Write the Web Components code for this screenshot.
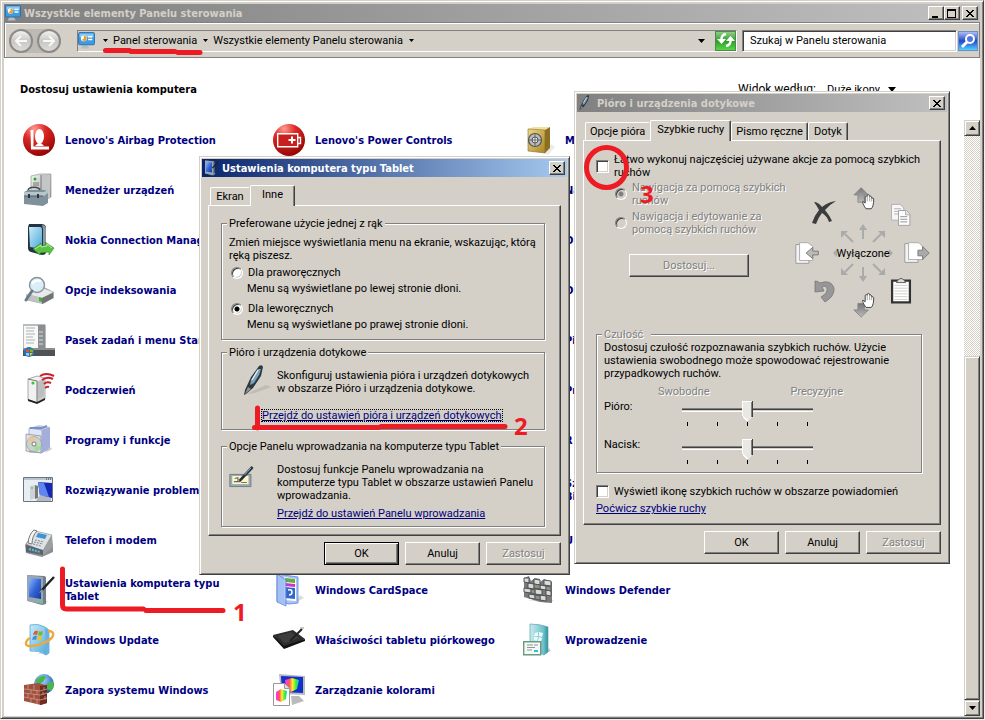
<!DOCTYPE html>
<html lang="pl">
<head>
<meta charset="utf-8">
<title>Wszystkie elementy Panelu sterowania</title>
<style>
html,body{margin:0;height:100%}
body{
  --face:#d4d0c8;--shade:#808080;--dark:#404040;--light:#fff;--link:#00007f;
  --bold:"DejaVu Sans Condensed","DejaVu Sans",sans-serif;
  font:11px/13px Roboto,"Liberation Sans",sans-serif;color:#000;
  background:#eceef0;overflow:hidden;position:relative;
}
main-window{height:calc(100vh - 1px);margin-right:1px}
.tablet{position:absolute;left:199px;top:156px;width:371px}
.pen{position:absolute;left:574px;top:91px;width:376px}
pen-marks{position:absolute;left:0;top:0}
</style>
</head>
<body>
<main-window></main-window>
<win-frame class="pen" inactive heading="Pióro i urządzenia dotykowe" icon="pen"><pen-settings></pen-settings></win-frame>
<win-frame class="tablet" heading="Ustawienia komputera typu Tablet" icon="tablet"><tablet-settings></tablet-settings></win-frame>
<pen-marks></pen-marks>
<script>
const DEFS = `<defs>
<linearGradient id="sil" x1="0" y1="0" x2="1" y2="1"><stop offset="0" stop-color="#f4f4f4"/><stop offset="1" stop-color="#8f9294"/></linearGradient>
<linearGradient id="blu" x1="0" y1="0" x2="1" y2="1"><stop offset="0" stop-color="#8ab8ff"/><stop offset=".5" stop-color="#3566d8"/><stop offset="1" stop-color="#163a9c"/></linearGradient>
<linearGradient id="sky" x1="0" y1="0" x2="1" y2="1"><stop offset="0" stop-color="#c8ecfa"/><stop offset="1" stop-color="#4aa6d8"/></linearGradient>
<linearGradient id="gry" x1="0" y1="0" x2="0" y2="1"><stop offset="0" stop-color="#777"/><stop offset="1" stop-color="#bbb"/></linearGradient>
<linearGradient id="tea" x1="0" y1="0" x2="1" y2="0"><stop offset="0" stop-color="#c9ecf0"/><stop offset=".75" stop-color="#6fc0c9"/><stop offset="1" stop-color="#2f8f9b"/></linearGradient>
<linearGradient id="gold" x1="0" y1="0" x2="1" y2="1"><stop offset="0" stop-color="#ecd88a"/><stop offset="1" stop-color="#a98526"/></linearGradient>
<linearGradient id="rain" x1="0" y1="0" x2="1" y2="0"><stop offset="0" stop-color="#f3f"/><stop offset=".3" stop-color="#f55"/><stop offset=".55" stop-color="#fe3"/><stop offset=".8" stop-color="#3e3"/><stop offset="1" stop-color="#0cf"/></linearGradient>
<radialGradient id="red" cx=".35" cy=".15" r="1"><stop offset="0" stop-color="#ff9a90"/><stop offset=".35" stop-color="#dc2a26"/><stop offset=".8" stop-color="#a00808"/><stop offset="1" stop-color="#6d0000"/></radialGradient>
<radialGradient id="glo" cx=".4" cy=".3" r=".8"><stop offset="0" stop-color="#a8e0ff"/><stop offset="1" stop-color="#0b3fa8"/></radialGradient>
</defs>`;
const ICONS = {
airbag:`<circle cx="16" cy="16" r="16" fill="url(#red)"/><path d="M7.500 6h3v16.500h15.500v3H8z" fill="#fff"/><ellipse cx="16.500" cy="12.500" rx="4.500" ry="7.500" fill="#fff"/><path d="M12 22q4.500-6 9 0z" fill="#fff"/>`,
battery:`<circle cx="16" cy="16" r="16" fill="url(#red)"/><path d="M4.700 9.700h20v13h-20z" fill="#c8201e" stroke="#fff" stroke-width="1.400"/><path d="M25 13.500h2.500v6H25" fill="none" stroke="#fff" stroke-width="1.400"/><path d="M15.500 16h7M19 12.500v7" fill="none" stroke="#fff" stroke-width="2"/>`,
safe:`<path d="M28 20l4 3-7 8-4-2z" fill="#ddd" opacity=".6"/><path d="M5 5l5-2h17l-5 3z" fill="#f0e2a4"/><path d="M22 6l5-3v21l-5 5z" fill="#8c7020"/><path d="M5 5l17 1v23L5 27z" fill="url(#gold)" stroke="#8c6d1c" stroke-width=".6"/><circle cx="12" cy="16" r="6.500" fill="#b9bcbd" stroke="#555" stroke-width="1.200"/><circle cx="12" cy="16" r="3" fill="#eee" stroke="#555"/><path d="M12 9.500v13M5.500 16h13" stroke="#555" stroke-width=".8"/>`,
devices:`<path d="M8 2l9-2h11v23l-7 4H8z" fill="url(#sil)" stroke="#888" stroke-width=".6"/><path d="M18 1h9v23l-7 3z" fill="#c3c5c6"/><path d="M18 1v25" stroke="#777"/><circle cx="12" cy="5" r="1.500" fill="#2a2"/><path d="M10 9h6M10 11h6" stroke="#777"/><path d="M5 17c0-5 12-5 12 0" fill="none" stroke="#444" stroke-width="1.500"/><path d="M1 18l4-2h17l3 2v11l-5 3L1 30z" fill="#7f929c"/><path d="M1 18h20l4-2v3l-4 3H1z" fill="#b6c4cb"/><path d="M1 22h19" stroke="#4c5c66"/><path d="M5 20h2v4H5zM14 20h2v4h-2z" fill="#333"/>`,
phone:`<path d="M6 0h12q5 0 5 4v24q0 3-4 3L8 28q-3-1-3-4V3z" fill="#24333f"/><path d="M6 3h11q2 0 2 3v19L7 23z" fill="url(#sky)"/><path d="M19 1q4 0 4 4v17h-3V5z" fill="#8a9aa4"/><path d="M10 25l8-6v3l5-1-1-3 9 6-5 7v-3l-9 1v2z" fill="#5cc044" stroke="#2b8a20" stroke-width=".6"/><path d="M12 25l6-4v2l6-1v-2l5 4" fill="none" stroke="#b5eb9c"/>`,
index:`<path d="M9 19l10-7 12 6v6l-11 6-18-4z" fill="#a9acae"/><path d="M4 20l12-7 14 5-11 6z" fill="#e8e9ea"/><path d="M19 24l11-5v5l-11 6z" fill="#707375"/><path d="M3 20l16 4v5L3 26z" fill="#bfc1c2"/><path d="M16 23l3 1v4l-3-1z" fill="#3bb32b"/><circle cx="14" cy="11" r="7.500" fill="#d7ecf7" fill-opacity=".9" stroke="#8b9399" stroke-width="1.400"/><path d="M9 10q3-5 9-3" fill="none" stroke="#fff" stroke-width="2"/><path d="M9 17l-6 9" stroke="#6c7b85" stroke-width="3" stroke-linecap="round"/>`,
taskbar:`<path d="M0 0h22l1 2v22H0z" fill="#b9bbbc"/><path d="M1 2h14v22H1z" fill="#f8f8f8"/><path d="M15 1h7v23h-7z" fill="#8b8e90"/><path d="M3 4h9M3 7h8M3 10h9M3 13h7M3 16h9M3 19h8" stroke="#a9b2b2"/><path d="M16 8h4M16 12h4M16 16h4M16 20h4" stroke="#ddd"/><path d="M0 24h32v8H0z" fill="#4e5357"/><path d="M0 24h32v2H0z" fill="#8b8f92"/><circle cx="6" cy="28" r="5" fill="#2a75b8"/><path d="M3 26l3-1v3H3z" fill="#f25022"/><path d="M7 25l3 1v2H7z" fill="#7fba00"/><path d="M3 29h3v3l-3-1z" fill="#9cf"/><path d="M7 29h3l-3 3z" fill="#fc0"/>`,
infrared:`<path d="M5 5l9-3 8 2v21l-8 4-9-3z" fill="#f1f1f1" stroke="#888" stroke-width=".7"/><path d="M14 7l8-3v21l-8 4z" fill="#c8caca"/><path d="M5 5l9 2v22" fill="none" stroke="#777"/><path d="M16 8v16M18 7v16M20 6v16" stroke="#aaa" stroke-width=".7"/><circle cx="10" cy="9" r="1.600" fill="#3c3"/><path d="M5 25l9 3 8-4v2l-8 4-9-3z" fill="#222"/><path d="M17 2q6-4 14 0M19 6q5-4 11-1M21 10q3-3 7-1M22 14q2-2 4-1" fill="none" stroke="#c8202c" stroke-width="2"/>`,
programs:`<path d="M6 4l10-3 11 2v20l-8 6H6z" fill="#c2cce8"/><path d="M6 4l13 2v23L6 26z" fill="#dfe5f5" stroke="#8d9cc8" stroke-width=".7"/><path d="M19 6l8-3v22l-8 4z" fill="#a3aedb"/><path d="M7 4h12l5-2" stroke="#7e8fc4" stroke-width="2" fill="none"/><path d="M3 10l15 2v17L3 27z" fill="#d9dde2" fill-opacity=".8" stroke="#888" stroke-width=".7"/><circle cx="11" cy="20" r="7.500" fill="#c9d4c9" stroke="#888" stroke-width=".5"/><path d="M11 20l-6-5q3-3 6-2z" fill="#f3c28f"/><path d="M11 20l7 3q-2 5-6 4z" fill="#9fdca0"/><circle cx="11" cy="20" r="2" fill="#fff" stroke="#777"/><path d="M22 29l7-4-2-2z" fill="#ccc"/>`,
trouble:`<path d="M.5 3.500h29v24H.5z" fill="#e9eef2" stroke="#687684"/><path d="M1 4h28v2H1z" fill="#b9c6d1"/><path d="M23 5h1M25 5h1M27 5h1" stroke="#333"/><path d="M15 8l14 1v15l-12-2z" fill="#1428b4"/><path d="M15 8l6 1 5 14-9-1z" fill="#5d86ef"/><path d="M17 21l11 3v3H13z" fill="#b4b8c0"/><path d="M7 12l5-1v13l-5 2z" fill="#ced2d5"/><path d="M12 11l3 1v12l-3 1z" fill="#777"/><path d="M8 14h2" stroke="#4b4"/>`,
modem:`<path d="M2 21l9-13 17 4 2 11v5l-11 5-16-4z" fill="#8d9194"/><path d="M3 20l9-13 17 4-9 16z" fill="#dfe2e4" stroke="#808589" stroke-width=".6"/><path d="M3 21l17 5v5L3 28z" fill="#5c6469"/><path d="M15 9l9 2-2 4-9-2z" fill="#3a95d2"/><path d="M5 19q1-9 6-13l3 1q-5 5-5 13z" fill="#f5f5f5" stroke="#777"/><path d="M12 16l9 2M11 18l9 2M10 20l8 2" stroke="#889" stroke-width="1" stroke-dasharray="2 1"/><path d="M6 25l11 3" stroke="#4fc3ee" stroke-width="2" stroke-dasharray="2 1"/><path d="M20 26l9-15 1 12-10 8z" fill="#9b9fa2"/>`,
tablet:`<path d="M13 30l12-2-4-3z" fill="#ccc"/><path d="M4 1l17 1q2 0 2 2v26l-4 1L5 27q-1 0-1-2z" fill="#6f7f8e"/><path d="M4 1l16 2v27L4 27z" fill="#98a6b2"/><path d="M6 4l12 1v20L6 23z" fill="url(#blu)"/><path d="M16 28l2 .5" stroke="#3e4" stroke-width="2"/><path d="M31 3L18 17" stroke="#1d2226" stroke-width="2.400"/><path d="M19 15l-3 4 4-2z" fill="#9aa"/>`,
update:`<path d="M14 31l13-5-4-3z" fill="#ddd"/><path d="M7 1q8-2 15 2l4 3v23l-3 2q-7-5-16-4z" fill="url(#sky)" stroke="#5ba7d0" stroke-width=".8"/><path d="M22 4l4 2v23l-3 2z" fill="#69b1df"/><path d="M11 8q2-2 4-1l-1 4q-2-1-4 0z" fill="#e2582a"/><path d="M16 7q2 1 4 0l-1 4q-2 1-4 0z" fill="#7db72f"/><path d="M10 13q2-2 4-1l-1 4q-2-1-4 0z" fill="#3f8fdc"/><path d="M15 12q2 1 4 0l-1 4q-2 1-4 0z" fill="#f3c11b"/><path d="M25 7c8 0 7 7-4 12-9 4-18 4-18 1 0-3 2-5 4-6" fill="none" stroke="#f0a838" stroke-width="2.400"/>`,
firewall:`<circle cx="21" cy="10" r="10" fill="url(#glo)"/><path d="M13 6q6-6 10-3l-3 5-6 3zM24 10l6-3q2 6-2 10l-4-2z" fill="#49b749"/><path d="M1 11l15-2 8 3v17l-6 2L1 27z" fill="#a0503e"/><path d="M17 12l7-1v18l-7 2z" fill="#6f2c20"/><path d="M1 15l16 2 7-2M1 19l16 2 7-2M1 23l16 3 7-2M5 11v4M11 11v5M8 16v3M14 16v4M5 20v3M11 20v5M8 24v4M14 25v5M21 13v3M20 18v3M22 22v4" stroke="#d09a8a" fill="none" stroke-width=".8"/>`,
cardspace:`<path d="M22 29l9-5-4-3z" fill="#ddd"/><path d="M4 0l21 3v26l-9 1L4 27z" fill="#a9c4f5" stroke="#5a83d8" stroke-width=".8"/><path d="M11 3l12 2v22l-12-1z" fill="#fff"/><path d="M12 4l10 1v4l-10-1z" fill="#6a4"/><path d="M12 9l10 1v3l-10-1z" fill="#c3c"/><path d="M12 13l10 1v11l-10-1z" fill="#36c"/><path d="M15 16q4-1 4 2t-3 3" stroke="#fff" fill="none" stroke-width="1.500"/><path d="M4 0l9 6v26l-9-4z" fill="#a3c0f5" fill-opacity=".85" stroke="#5a83d8" stroke-width=".8"/>`,
wtablet:`<path d="M0 11l20-5 12 9-19 9-3-1z" fill="#2d2d2e"/><path d="M0 11l11 11 21-7v2L11 25 0 13z" fill="#111"/><path d="M4 12l14-4 8 6-14 5z" fill="#3c3d3f"/><path d="M29 5L17 17" stroke="#222" stroke-width="2"/><path d="M27 4h4" stroke="#999"/>`,
colors:`<path d="M6 0l26 2v19l-24-1z" fill="#b8bcc0"/><path d="M8 2l22 1v16L9 18z" fill="#1430c8"/><path d="M12 6l7-2 7 2-2 9-6 3-5-3z" fill="url(#rain)"/><path d="M18 22h8l5 5-12 4z" fill="#bbb"/><path d="M.5 9.500h11l5 5v17H.5z" fill="#fff" stroke="#999"/><path d="M11.500 9.500v5h5" fill="#ddd" stroke="#999"/><path d="M3 18l5-3 6 2-1 8-5 3-5-2z" fill="url(#rain)"/>`,
defender:`<path d="M4 26l27 0-4 3z" fill="#ddd"/><path d="M1 4l5-2 2 5 4-3 5 1v3l4-3 8 3v21l-12-1L1 23z" fill="#77797b"/><g fill="#d9dadb" stroke="#46484a" stroke-width=".9"><path d="M1 4l5 0v5l-5-1zM11 5l6 1v5l-6-1zM21 6l7 1v5l-7-1zM5 9l6 1v5l-6-1zM17 11l6 1v4l-6-1zM1 14l7 1v4l-7-1zM12 15l7 1v5l-7-1zM23 16l5 1v5l-5-1zM6 20l6 1v4l-6-1zM17 21l6 1v5l-6-1z"/></g><g fill="#8c9381" stroke="#46484a" stroke-width=".7"><path d="M11 10l6 1v4l-6-1zM8 15l4 1v4l-4-1zM12 21l5 1v4l-5-1zM23 12l5 1v4l-5-1z"/></g>`,
intro:`<path d="M20 30l8-3-2-3z" fill="#ccc"/><path d="M7 0q10 0 18 3v25l-4 3q-6-4-14-4z" fill="url(#tea)" stroke="#58a5ae" stroke-width=".7"/><path d="M12 9l3-1v4h-4zM16 8l4 1-1 4-3-1zM11 13h4l-1 4-3-1zM16 13l3 1-1 4-3-1z" fill="#e9fbfc"/><path d="M.7 17.700h17v13H.7z" fill="#f6faf6" stroke="#6b9a80" stroke-width="1.400"/><path d="M4 21h6M4 23.500h8M4 26h5M11 21h4" stroke="#8a9a92"/><path d="M11 26h4v2h-4z" fill="#3bd"/>`,
panel:`<path d="M6 31q0-7 7-7t8 7z" fill="#b9bcc0"/><rect x="1" y="1" width="30" height="23" rx="2" fill="#3d9be2" stroke="#1d66a8" stroke-width="1.500"/><path d="M3 3h26v7H3z" fill="#8ac8f4"/><circle cx="11" cy="12" r="5.500" fill="#fff"/><path d="M11 12V7a5 5 0 010 10l-4-2z" fill="#f59a1c"/><path d="M19 9h8M19 14h8" stroke="#fff" stroke-width="2.600"/>`,
pen:`<path d="M5 29l20-9 5 2-16 6z" fill="#8d8d88" opacity=".3"/><path d="M18 1q3-2 4 1l-2 9-8 12-7 6-2 1 1-5 6-13z" fill="#30383e"/><path d="M17 4l-7 11-1 5 4-2 5-8 2-6z" fill="#7ba3bc"/><path d="M17 5l-6 10" stroke="#dceef8" stroke-width="1.400"/><path d="M7 22l3 2-6 5z" fill="#8b959b"/>`,
input:`<path d="M1 14h26v15H1z" fill="#9aa9b2" stroke="#63717a"/><path d="M4 16h20v10H4z" fill="#fbf6c9"/><path d="M7 19l4-1v5M6 23h8" stroke="#666" fill="none" stroke-width="1.400"/><path d="M15 24h7" stroke="#555"/><path d="M29 5L13 22" stroke="#233038" stroke-width="3.400"/><path d="M27 6L19 15" stroke="#86b3cf" stroke-width="1.200"/>`,
up:`<path d="M10 2l9 9h-5v9H6v-9H1z" fill="url(#gry)" stroke="#777" stroke-width=".8"/><g transform="translate(11 9)"><path d="M5 19Q0 12 1 10l3 2V4q1.500-1.500 2.500 0V2.500q1.500-1.500 3 0V4q1.500-1 2.500.500V6q2-1 2.500 1 0 9-3 12z" fill="#fff" stroke="#444" stroke-width="1.200"/><path d="M6.500 4v6M9.500 4v6M12 5.500V10" stroke="#777" stroke-width=".8"/></g>`,
down:`<path d="M10 31l9-9h-5v-8H6v8H1z" fill="url(#gry)" stroke="#777" stroke-width=".8"/><g transform="translate(11 0)"><path d="M5 19Q0 12 1 10l3 2V4q1.500-1.500 2.500 0V2.500q1.500-1.500 3 0V4q1.500-1 2.500.500V6q2-1 2.500 1 0 9-3 12z" fill="#fff" stroke="#444" stroke-width="1.200"/><path d="M6.500 4v6M9.500 4v6M12 5.500V10" stroke="#777" stroke-width=".8"/></g>`,
copy:`<path d="M4 5h10l4 4v14H4z" fill="#f7f7f7" stroke="#aaa"/><path d="M7 10h8M7 13h8M7 16h8" stroke="#aaa"/><path d="M12 12h9l4 4v13H12z" fill="#fdfdfd" stroke="#999"/><path d="M20 12v5h5" fill="#ddd" stroke="#aaa"/><path d="M14 19h8M14 22h8M14 25h8" stroke="#888"/>`,
forward:`<path d="M3 6h14v20H3z" fill="#f3f3f3" stroke="#999"/><path d="M7 5h11l4 4v14H7z" fill="#fff" stroke="#aaa"/><path d="M17 13h5V9l7 7-7 7v-4h-5z" fill="#aaa" stroke="#777"/>`,
back:`<path d="M3 7h14v20H3z" fill="#f3f3f3" stroke="#999"/><path d="M7 5h9l5 4v15H7z" fill="#fff" stroke="#aaa"/><path d="M27 14h-6v-4l-7 6 7 6v-4h6z" fill="#bbb" stroke="#777"/>`,
clip:`<path d="M6.500 5h19v23h-19z" fill="#fff" stroke="#333" stroke-width="2.400"/><path d="M9 10h14M9 13h14M9 16h14M9 19h14M9 22h14M9 25h14" stroke="#ccc"/><path d="M11 7l2-3q3-3 6 0l2 3z" fill="#ddd" stroke="#555"/>`,
undo:`<path d="M6 7q3 0 5 2 11-4 14 5 1 8-9 14l-4-5q7-4 6-9-1-3-5-1l2 4-9 1z" fill="#979797" stroke="#777" stroke-width=".8"/>`,
cross:`<path d="M5 5q4 0 8 5 6-5 14-6-7 4-11 9 5 6 7 11l-3 1q-2-6-7-9-4 5-6 11l-4-1q2-7 7-13-2-4-5-8z" fill="#3c3c3c"/>`
};
const svg=(n,w)=>`<svg width="${w}" height="${w}" viewBox="0 0 32 32" aria-hidden="true">${DEFS}${ICONS[n]}</svg>`;
const define=(name,html,setup)=>{
  const t=document.createElement('template');t.innerHTML=html;
  customElements.define(name,class extends HTMLElement{
    connectedCallback(){
      if(this.shadowRoot)return;
      const r=this.attachShadow({mode:'open'});
      r.append(t.content.cloneNode(true));
      if(setup)setup(r,this);
    }
  });
};

define('win-icon',`<style>:host{display:block;flex:none}svg{display:block;overflow:visible}</style>`,(r,h)=>{
  r.innerHTML+=svg(h.getAttribute('name'),h.getAttribute('size')||32);
});

define('caption-button',`<style>
:host{display:block;flex:none}
button{display:grid;place-items:center;width:16px;height:14px;padding:0;background:var(--face);border:1px solid;border-color:#fff #404040 #404040 #fff;box-shadow:inset -1px -1px #808080}
svg{display:block}
</style><button><svg width="10" height="9" viewBox="0 0 10 9" shape-rendering="crispEdges"></svg></button>`,(r,h)=>{
  const k=h.getAttribute('kind');
  r.querySelector('button').setAttribute('aria-label',k);
  r.querySelector('svg').innerHTML={
    close:'<path d="M1 1h2v1h1v1h2V2h1V1h2v1H8v1H7v1H6v1h1v1h1v1h1v1H7V7H6V6H4v1H3v1H1V7h1V6h1V5h1V4H3V3H2V2H1z"/>',
    minimize:'<path d="M1 7h6v2H1z"/>',
    maximize:'<path fill-rule="evenodd" d="M0 0h9v9H0zM1 2h7v6H1z"/>'}[k];
});

define('title-bar',`<style>
:host{display:flex;align-items:center;height:18px;padding:0 2px 0 1px;background:linear-gradient(90deg,#0a246a,#a6caf0);color:#fff;font:bold 11px/13px var(--bold)}
:host([inactive]){background:linear-gradient(90deg,#808080,#c0c0c0);color:var(--face)}
span{flex:1;padding-left:3px;white-space:nowrap}
div{display:flex}
caption-button[kind=close]:not(:first-child){margin-left:2px}
</style><span></span><div></div>`,(r,h)=>{
  const s=r.querySelector('span');
  s.textContent=h.getAttribute('heading');
  s.insertAdjacentHTML('beforebegin',`<win-icon size="16" name="${h.getAttribute('icon')}"></win-icon>`);
  r.querySelector('div').innerHTML=(h.getAttribute('buttons')||'close').split(' ').map(b=>`<caption-button kind="${b}"></caption-button>`).join('');
});

define('win-frame',`<style>
:host{display:flex;flex-direction:column;box-sizing:border-box;padding:2px;background:var(--face);border:1px solid;border-color:#d4d0c8 #404040 #404040 #d4d0c8;box-shadow:inset 1px 1px #fff,inset -1px -1px #808080}
.body{flex:1;min-height:0;display:flex;flex-direction:column}
</style><div class="top"></div><div class="body"><slot></slot></div>`,(r,h)=>{
  r.querySelector('.top').innerHTML=`<title-bar heading="${h.getAttribute('heading')}" icon="${h.getAttribute('icon')}" buttons="${h.getAttribute('buttons')||'close'}"${h.hasAttribute('inactive')?' inactive':''}></title-bar>`;
});

define('win-button',`<style>
:host{display:block;width:75px}
button{width:100%;height:23px;padding:0;font:inherit;color:#000;background:var(--face);border:1px solid;border-color:#fff #404040 #404040 #fff;box-shadow:inset -1px -1px #808080}
:host([primary]) button{border-color:#000;box-shadow:inset 1px 1px #fff,inset -1px -1px #404040,inset -2px -2px #808080}
button:disabled{color:#808080;text-shadow:1px 1px #fff}
</style><button><slot></slot></button>`,(r,h)=>{r.querySelector('button').disabled=h.hasAttribute('disabled')});

define('dialog-body',`<style>
:host{display:block;padding:8px 6px 7px}
.tabs{display:flex;align-items:flex-end;height:20px;padding-left:2px}
.panel{display:flex;flex-direction:column;padding:0 15px 0 12px;border:1px solid;border-color:#fff #404040 #404040 #fff;box-shadow:inset -1px -1px #808080}
.buttons{display:flex;justify-content:flex-end;gap:6px;padding-top:6px}
button{box-sizing:border-box;min-width:40px;height:18px;padding:0 4px;font:inherit;color:#000;white-space:nowrap;background:var(--face);border:1px solid;border-color:#fff #404040 transparent #fff;border-bottom:0;border-radius:2px 2px 0 0;box-shadow:inset -1px 0 #808080}
button.before{border-right-color:var(--face);box-shadow:none}
button[aria-selected=true]{position:relative;min-width:45px;height:21px;margin-bottom:-1px;padding:0 6px 3px}
</style><div class="tabs" role="tablist"></div><div class="panel"><slot></slot></div>
<div class="buttons"></div>`,(r,h)=>{
  const tabs=h.getAttribute('tabs').split('|'),sel=+h.getAttribute('selected');
  r.querySelector('.tabs').innerHTML=tabs.map((t,i)=>`<button role="tab" aria-selected="${i===sel}" class="${i<sel?'before':''}">${t}</button>`).join('');
  r.querySelector('.buttons').innerHTML=`<win-button${h.hasAttribute('primary')?' primary':''}>OK</win-button><win-button>Anuluj</win-button><win-button disabled>Zastosuj</win-button>`;
});

define('group-box',`<style>
:host{display:block}
fieldset{min-width:0;margin:0;padding:0 7px;border:1px solid #808080;box-shadow:1px 1px #fff,inset 1px 1px #fff}
legend{position:relative;margin:0;padding:0 2px;margin-left:-2px;background:var(--face)}
:host([disabled]) legend{color:#808080;text-shadow:1px 1px #fff;padding-right:8px}
</style><fieldset><legend></legend><slot></slot></fieldset>`,(r,h)=>{r.querySelector('legend').textContent=h.getAttribute('label')});

define('check-option',`<style>
:host{display:block}
label{display:flex;align-items:center;gap:5px;white-space:nowrap}
input{appearance:none;flex:none;box-sizing:border-box;width:13px;height:13px;margin:0;background:#fff;border:1px solid;border-color:#808080 #fff #fff #808080;box-shadow:inset 1px 1px #404040,inset -1px -1px #d4d0c8}
input[type=radio]{width:12px;height:12px;border-radius:50%}
input[type=radio]:checked{background:radial-gradient(circle,#000 0 2px,#fff 3px)}
input[type=radio]:disabled{background:var(--face)}
input[type=radio]:disabled:checked{background:radial-gradient(circle,#808080 0 2px,var(--face) 3px)}
:host([disabled]) label{color:#808080;text-shadow:1px 1px #fff}
</style><label><input><span><slot></slot></span></label>`,(r,h)=>{
  const i=r.querySelector('input');i.type=h.getAttribute('type')||'checkbox';
  i.checked=h.hasAttribute('checked');i.disabled=h.hasAttribute('disabled');
});

define('tick-slider',`<style>
:host{display:block;width:131px}
input{appearance:none;display:block;width:100%;height:22px;margin:0;background:linear-gradient(#808080 1px,#404040 1px 2px,#d4d0c8 2px 3px,#fff 3px) 0 8px/100% 4px no-repeat}
input::-webkit-slider-thumb{appearance:none;width:11px;height:21px;border:0;background:url("data:image/svg+xml,%3Csvg xmlns='http://www.w3.org/2000/svg' width='11' height='21' shape-rendering='crispEdges'%3E%3Cpath d='M0 0h11v15l-5 5H5l-5-5z' fill='%23eae8e3'/%3E%3Cpath d='M.5 15V.5H10M1 15.500l4.500 4.500' fill='none' stroke='%23fff'/%3E%3Cpath d='M9.500 1v14.500' fill='none' stroke='%23808080'/%3E%3Cpath d='M10.500 0v15.500' fill='none' stroke='%23404040'/%3E%3C/svg%3E")}
.ticks{display:flex;justify-content:space-between;padding:0 5px}
i{width:1px;height:4px;background:#000}
</style><input type="range" min="0" max="4" value="2"><div class="ticks"><i></i><i></i><i></i><i></i><i></i></div>`,(r,h)=>{r.querySelector('input').setAttribute('aria-label',h.getAttribute('label'))});

define('tablet-settings',`<style>
:host{display:block}
p{margin:0;white-space:nowrap}
a{color:var(--link);white-space:nowrap}
.one{margin-top:11px}.two{margin-top:6px}.three{margin-top:10px;margin-bottom:8px}
.hand{padding:6px 0 8px}
.hand check-option{margin:4px 0 3px 2px}
.hand .second{margin-top:7px}
.sub{padding-left:18px}
.row{display:grid;grid-template-columns:48px 1fr;padding-top:10px}
.row win-icon{justify-self:start}
.pen{padding-left:12px;grid-template-columns:36px 1fr}
.pen win-icon{margin-top:-4px;height:30px}
.focus{display:block;width:fit-content;margin:14px 0 7px 32px;padding:0 1px;outline:1px dotted #000;outline-offset:-1px}
.last{display:inline-block;margin:5px 0 6px}
</style>
<dialog-body tabs="Ekran|Inne" selected="1" primary>
<group-box class="one" label="Preferowane użycie jednej z rąk"><div class="hand">
<p>Zmień miejsce wyświetlania menu na ekranie, wskazując, którą<br>ręką piszesz.</p>
<check-option type="radio">Dla praworęcznych</check-option><p class="sub">Menu są wyświetlane po lewej stronie dłoni.</p>
<check-option class="second" type="radio" checked>Dla leworęcznych</check-option><p class="sub">Menu są wyświetlane po prawej stronie dłoni.</p>
</div></group-box>
<group-box class="two" label="Pióro i urządzenia dotykowe">
<div class="row pen"><win-icon name="pen" size="32"></win-icon><p>Skonfiguruj ustawienia pióra i urządzeń dotykowych<br>w obszarze Pióro i urządzenia dotykowe.</p></div>
<a class="focus" href="#pen">Przejdź do ustawień pióra i urządzeń dotykowych</a>
</group-box>
<group-box class="three" label="Opcje Panelu wprowadzania na komputerze typu Tablet">
<div class="row"><win-icon name="input" size="26"></win-icon><div><p>Dostosuj funkcje Panelu wprowadzania na<br>komputerze typu Tablet w obszarze ustawień Panelu<br>wprowadzania.</p><a class="last" href="#input">Przejdź do ustawień Panelu wprowadzania</a></div></div>
</group-box>
</dialog-body>`);

define('gesture-pad',`<style>
:host{display:block;position:relative;width:136px;height:140px}
win-icon,.arrows,span{position:absolute;transform:translate(-50%,-50%)}
.arrows,span{left:50%;top:72px}
</style>
<svg class="arrows" width="62" height="60" viewBox="-31 -30 62 60" fill="#aaa" stroke="#aaa" stroke-width="2"><path d="M0-14v-11M0 14v11M-10-11l-8-8M10-11l8-8M-10 11l-8 8M10 11l8 8"/><path d="M-4-23l4-6 4 6zM-4 23l4 6 4-6zM-22-22h7l-7 7zM22-22h-7l7 7zM-22 22h7l-7-7zM22 22h-7l7-7zM-30 0l4-4v8zM30 0l-4-4v8z" stroke="none"/></svg>
<span>Wyłączone</span>`,r=>{
  for(const [n,x,y,s] of [['up',71,18,26],['copy',107,33,28],['forward',122,72,30],['clip',106,110,30],['down',71,124,26],['undo',30,109,32],['back',13,72,30],['cross',30,32,32]])
    r.innerHTML+=`<win-icon name="${n}" size="${s}" style="left:${x}px;top:${y}px"></win-icon>`;
});

define('pen-settings',`<style>
:host{display:block}
p{margin:0;white-space:nowrap}
a{display:block;width:fit-content;color:var(--link);margin:4px 0 9px}
.main{margin:12px 0 2px}
.mid{display:flex;justify-content:space-between;margin-right:-6px}
.mid>div{display:flex;flex-direction:column;gap:3px;padding-left:19px}
.mid win-button{width:120px;margin:15px 0 0 14px}
.sense{margin:7px 3px 0 0}
.ends{display:flex;justify-content:space-between;width:185px;margin:5px 0 2px 54px;color:#808080;text-shadow:1px 1px #fff}
.row{display:grid;grid-template-columns:78px auto;justify-content:start;min-height:30px;margin-bottom:8px}
.row+.row{margin-bottom:4px}
.tray{margin-top:12px}
</style>
<dialog-body tabs="Opcje pióra|Szybkie ruchy|Pismo ręczne|Dotyk" selected="1">
<check-option class="main">Łatwo wykonuj najczęściej używane akcje za pomocą szybkich<br>ruchów</check-option>
<div class="mid"><div>
<check-option type="radio" disabled checked>Nawigacja za pomocą szybkich<br>ruchów</check-option>
<check-option type="radio" disabled>Nawigacja i edytowanie za<br>pomocą szybkich ruchów</check-option>
<win-button disabled>Dostosuj...</win-button></div>
<gesture-pad></gesture-pad></div>
<group-box class="sense" label="Czułość" disabled>
<p>Dostosuj czułość rozpoznawania szybkich ruchów. Użycie<br>ustawienia swobodnego może spowodować rejestrowanie<br>przypadkowych ruchów.</p>
<div class="ends"><span>Swobodne</span><span>Precyzyjne</span></div>
<div class="row"><span>Pióro:</span><tick-slider label="Pióro"></tick-slider></div>
<div class="row"><span>Nacisk:</span><tick-slider label="Nacisk"></tick-slider></div>
</group-box>
<check-option class="tray">Wyświetl ikonę szybkich ruchów w obszarze powiadomień</check-option>
<a href="#practice">Poćwicz szybkie ruchy</a>
</dialog-body>`);

define('cp-item',`<style>
:host{display:block}
a{display:grid;grid-template-columns:32px 184px;gap:10px;align-items:center;min-height:32px;color:var(--link);font:bold 11px/13px var(--bold);text-decoration:none}
</style><a href="#item"><span></span><b><slot></slot></b></a>`,(r,h)=>{
  const n=h.getAttribute('icon');if(n)r.querySelector('span').innerHTML=`<win-icon name="${n}"></win-icon>`;
});

define('scroll-bar',`<style>
:host{display:flex;flex-direction:column;width:16px;background:repeating-conic-gradient(#fff 0 25%,#d4d0c8 0 50%) 0 0/2px 2px}
button,.thumb{box-sizing:border-box;width:16px;background:var(--face);border:1px solid;border-color:#d4d0c8 #404040 #404040 #d4d0c8;box-shadow:inset 1px 1px #fff,inset -1px -1px #808080}
button{height:16px;padding:0;display:grid;place-items:center}
.track{flex:1;display:flex;flex-direction:column;justify-content:flex-end}
.thumb{height:61%}
</style><button aria-label="W górę"><svg width="7" height="4"><path d="M0 4h7L3.500 0z"/></svg></button><div class="track"><div class="thumb"></div></div><button aria-label="W dół"><svg width="7" height="4"><path d="M0 0h7L3.500 4z"/></svg></button>`);

define('nav-toolbar',`<style>
:host{display:flex;align-items:center;height:33px;padding:1px 0 0 4px;background:var(--face);border:1px solid #808080;box-shadow:inset 1px 1px #fff}
.nav{display:flex;gap:4px;margin-right:16px;border-radius:13px;background:#bdbab4}
.nav button{width:24px;height:24px;padding:0;border:2px solid #8b8b89;border-radius:50%;background:linear-gradient(#f1f1ef,#c8c7c3 50%,#dcdbd7);display:grid;place-items:center}
.addr{flex:1;box-sizing:border-box;height:22px;display:flex;align-items:center;border:1px solid;border-color:#808080 #fff #fff #808080;margin-right:5px;white-space:nowrap}
.addr a{color:#000;text-decoration:none;padding:0 6px 0 5px}
.addr win-icon{margin-right:8px}
.drop{margin-left:auto;margin-right:10px}
.arrow{width:5px;height:3px}
.refresh,.find{box-sizing:border-box;padding:0;height:20px;display:grid;place-items:center}
.refresh{width:21px;border:1px solid #52884f;background:linear-gradient(#8fcf83,#2f9c2c 50%,#56d843)}
.find{width:20px;border:1px solid #6b8fc4;background:linear-gradient(#aebcf2,#2347cc 50%,#51d2ff);margin:0 1px}
input{box-sizing:border-box;width:215px;height:22px;padding:0 7px;font:inherit;color:#000;background:#fff;border:1px solid;border-color:#808080 #fff #fff #808080;box-shadow:inset 1px 1px #404040,inset -1px -1px #d4d0c8;border-radius:0}
</style>
<div class="nav"><button aria-label="Wstecz"><svg width="16" height="14" fill="none" stroke="#f8f8f6" stroke-width="2"><path d="M14 7H3M8 2L3 7l5 5"/></svg></button><button aria-label="Dalej"><svg width="16" height="14" fill="none" stroke="#f8f8f6" stroke-width="2"><path d="M2 7h11M8 2l5 5-5 5"/></svg></button></div>
<div class="addr"><win-icon name="panel" size="17"></win-icon><svg class="arrow"><path d="M0 0h5L2.500 3z"/></svg><a href="#panel">Panel sterowania</a><svg class="arrow"><path d="M0 0h5L2.500 3z"/></svg><a href="#all">Wszystkie elementy Panelu sterowania</a><svg class="arrow"><path d="M0 0h5L2.500 3z"/></svg>
<svg class="drop" width="7" height="4"><path d="M0 0h7L3.500 4z"/></svg>
<button class="refresh" aria-label="Odśwież"><svg width="18" height="15" fill="none" stroke="#fff" stroke-width="2.400"><path d="M9 1Q4 2 4.500 7M9 13q5-1 4.500-6"/><path d="M0 6h9l-4.500 5zM9 8h9l-4.500-5z" fill="#fff" stroke="none"/></svg></button></div>
<input type="text" aria-label="Szukaj" value="Szukaj w Panelu sterowania">
<button class="find" aria-label="Szukaj"><svg width="16" height="16" fill="none" stroke="#fff" stroke-width="2"><path d="M7 9l-5 5" stroke-width="3"/><circle cx="10" cy="6" r="4" fill="#4f78dd"/></svg></button>`);

define('main-window',`<style>
:host{display:block}
win-frame{height:100%;padding:3px 3px 2px}
.content{flex:1;min-height:0;display:flex;flex-direction:column;background:#fff}
header{display:flex;height:62px;align-items:center;box-sizing:border-box;padding:0 84px 0 16px;justify-content:space-between}
h1{margin:0;font:bold 11px/13px var(--bold)}
.view{display:flex;align-items:center;gap:11px}
.view span{font-size:12px}
.view button{display:flex;align-items:center;gap:8px;border:0;padding:0;background:none;font:inherit;color:#000}
.body{flex:1;min-height:0;display:flex;justify-content:space-between}
.grid{display:grid;grid-template-columns:repeat(3,226px);grid-auto-rows:32px;gap:18px 24px;padding:4px 0 0 19px}
.c3{grid-column:3}
</style>
<win-frame inactive heading="Wszystkie elementy Panelu sterowania" icon="panel" buttons="minimize maximize close">
<nav-toolbar></nav-toolbar>
<div class="content">
<header><h1>Dostosuj ustawienia komputera</h1><div class="view"><span>Widok według:</span><button>Duże ikony <svg width="8" height="5"><path d="M0 0h8L4 5z"/></svg></button></div></header>
<div class="body"><div class="grid">
<cp-item icon="airbag">Lenovo's Airbag Protection</cp-item><cp-item icon="battery">Lenovo's Power Controls</cp-item><cp-item icon="safe">M</cp-item>
<cp-item icon="devices">Menedżer urządzeń</cp-item><cp-item class="c3">Na</cp-item>
<cp-item icon="phone">Nokia Connection Manager</cp-item><cp-item class="c3">O</cp-item>
<cp-item icon="index">Opcje indeksowania</cp-item><cp-item class="c3">O</cp-item>
<cp-item icon="taskbar">Pasek zadań i menu Start</cp-item><cp-item class="c3">Pi</cp-item>
<cp-item icon="infrared">Podczerwień</cp-item><cp-item class="c3">Pr</cp-item>
<cp-item icon="programs">Programy i funkcje</cp-item><cp-item class="c3">R</cp-item>
<cp-item icon="trouble">Rozwiązywanie problemów</cp-item><cp-item class="c3">Sz<br>Bi</cp-item>
<cp-item icon="modem">Telefon i modem</cp-item><cp-item class="c3">U</cp-item>
<cp-item icon="tablet">Ustawienia komputera typu Tablet</cp-item><cp-item icon="cardspace">Windows CardSpace</cp-item><cp-item icon="defender">Windows Defender</cp-item>
<cp-item icon="update">Windows Update</cp-item><cp-item icon="wtablet">Właściwości tabletu piórkowego</cp-item><cp-item icon="intro">Wprowadzenie</cp-item>
<cp-item icon="firewall">Zapora systemu Windows</cp-item><cp-item icon="colors">Zarządzanie kolorami</cp-item>
</div><scroll-bar></scroll-bar></div>
</div></win-frame>`);

define('pen-marks',`<style>:host{display:block;pointer-events:none}svg{display:block}text{font:bold 24px "Open Sans",sans-serif;fill:#ed1c24}</style>
<svg width="985" height="720" viewBox="0 0 985 720" fill="none" stroke="#ed1c24" stroke-width="5" stroke-linecap="round" stroke-linejoin="round">
<path d="M105.500 50.500h24M131 51.500h44M178 52.500h22"/><path d="M62.500 569v36q0 4 4 4h77M146 610.500h77"/><path d="M257.500 408v20M254.500 427.500h124M381 426.500h124"/>
<circle cx="606.500" cy="167.500" r="20"/>
<g stroke="none"><text x="233" y="621">1</text><text x="514" y="435">2</text><text x="640" y="203">3</text></g></svg>`);
</script>
</body>
</html>
